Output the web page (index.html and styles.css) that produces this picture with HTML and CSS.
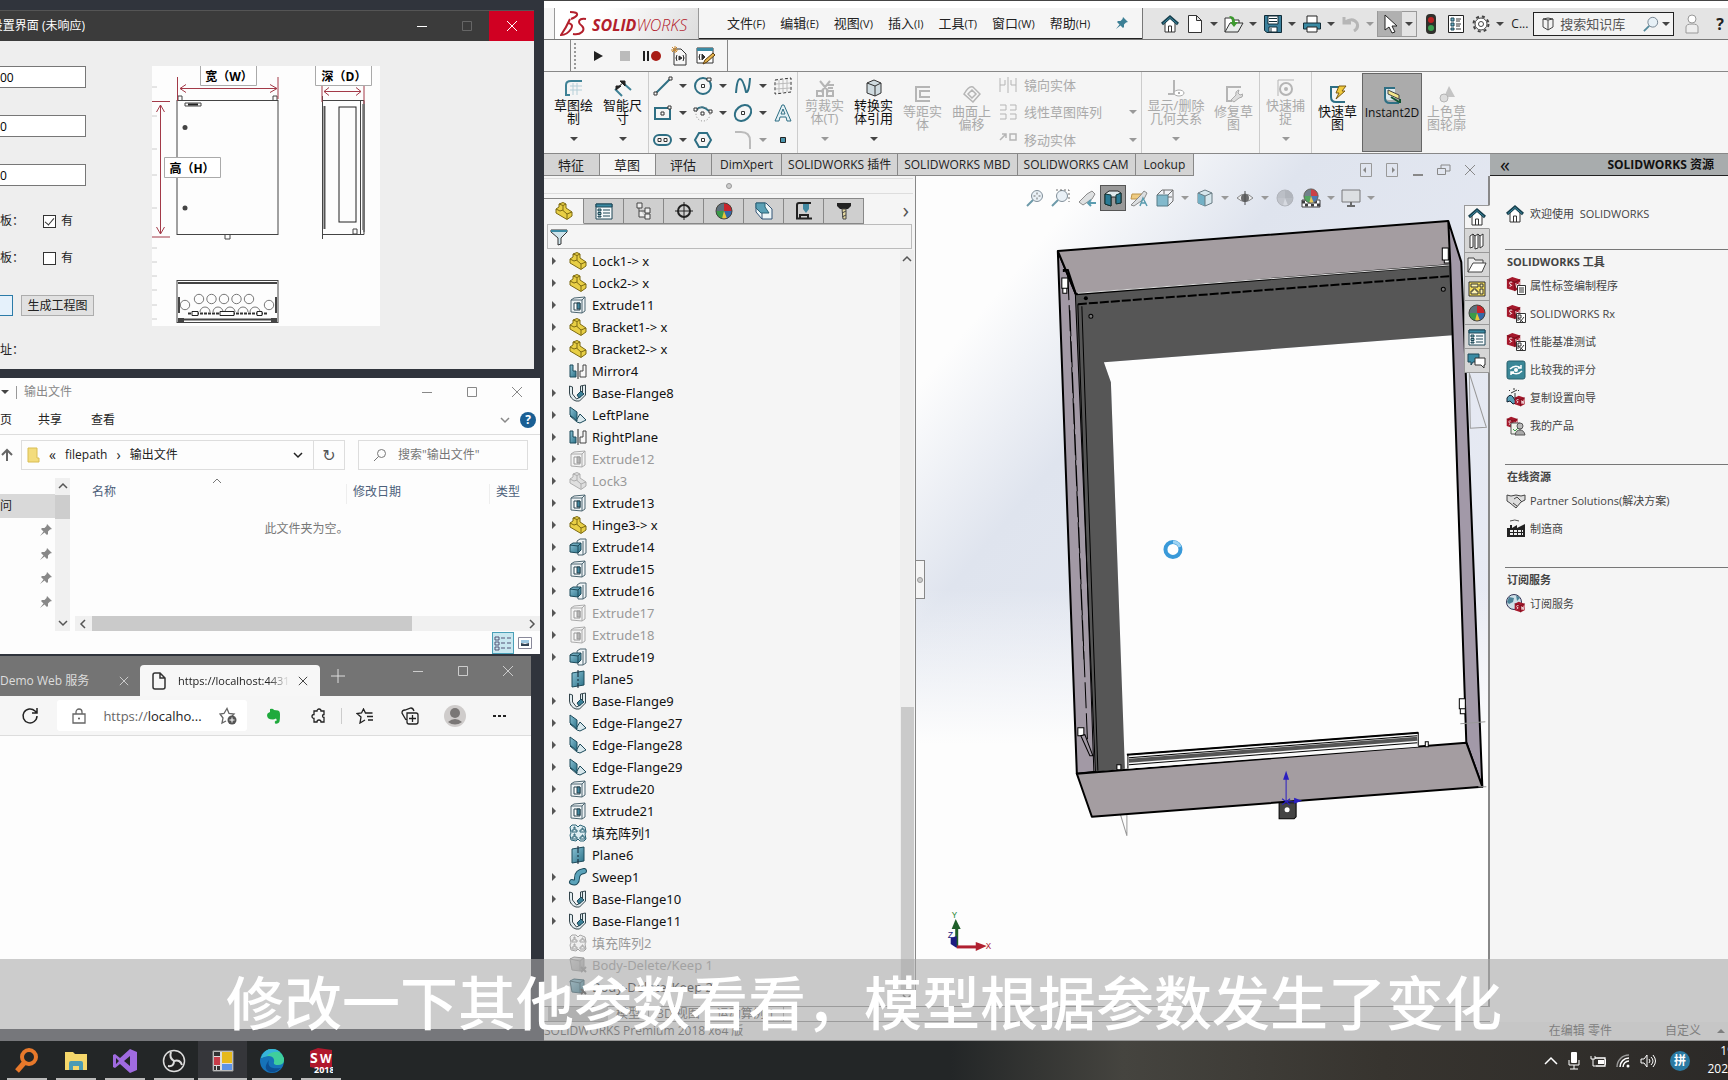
FILE: index.html
```html
<!DOCTYPE html>
<html lang="zh-CN">
<head>
    <meta charset="UTF-8">
    <meta name="viewport" content="width=device-width, initial-scale=1.0">
    <title>SOLIDWORKS</title>
    <link rel="stylesheet" href="styles.css">
</head>

<body>
    <!-- icons used more than once -->
    <svg class="defs" width="0" height="0" aria-hidden="true">
        <linearGradient id="teal" x1="0" y1="0" x2="1" y2="1"><stop offset="0" stop-color="#8cc3d6"/><stop offset="1" stop-color="#2c7288"/></linearGradient>
        <symbol id="part" viewBox="0 0 18 18"><path d="M1 7l3-2V2l4-1.500L11 2v4l6 4v4l-5 3.500L1 11z" fill="#e8cf45" stroke="#7d6a12"/><path d="M4 2l4 1.500L11 2M8 3.500v5l4 3.500 5-2M12 12v5M1 7l4 2 3-1" fill="none" stroke="#7d6a12"/></symbol>
        <symbol id="cut" viewBox="0 0 18 18"><path d="M2 4l3-2 11-1v14l-3 2-11-1z" fill="#eef3f5" stroke="#4c6570"/><path d="M2 4l11 0v13M13 4l3-3" fill="none" stroke="#4c6570"/><path d="M5 7h6v7H5z" fill="#fff" stroke="#27434f"/><path d="M8 7h3v6H8z" fill="#3f87a0" stroke="#27434f"/></symbol>
        <symbol id="boss" viewBox="0 0 18 18"><path d="M8 3l3-2h6v14l-3 2H9z" fill="#eef3f5" stroke="#4c6570"/><path d="M14 3v14" stroke="#4c6570"/><path d="M1 7l3-2 8 0v7l-3 3-8-1z" fill="url(#teal)" stroke="#1c4a5a"/><path d="M1 7l8 1v7M9 8l3-3" fill="none" stroke="#1c4a5a"/></symbol>
        <symbol id="mirror" viewBox="0 0 18 18"><path d="M1 3h3v6h3v6H1z" fill="url(#teal)" stroke="#1c4a5a"/><path d="M17 3h-3v6h-3v6h6z" fill="#f8f8f8" stroke="#444"/><path d="M9 1v16" stroke="#222"/></symbol>
        <symbol id="base" viewBox="0 0 18 18"><path d="M.500 2l3 1v7l4 5 4-2V2l5-1v10l-6 6H7Q1 15 .500 9z" fill="#e3edf0" stroke="#33444b"/><path d="M8 11l4-4 3 3-5 4z" fill="#3b7f96" stroke="#1c4a5a"/><path d="M13.500 2v7" stroke="#33444b"/></symbol>
        <symbol id="edge" viewBox="0 0 18 18"><path d="M1 10l7 6 3 1 6-3-6-6-3 5z" fill="#d8e7ec" stroke="#1c4a5a"/><path d="M1 1l7 5v9L1 9z" fill="url(#teal)" stroke="#1c4a5a"/></symbol>
        <symbol id="plane" viewBox="0 0 18 18"><path d="M3 3l12-2v14L3 17z" fill="url(#teal)" stroke="#1c4a5a"/><path d="M9 0v7m0 2v2m0 2v5" stroke="#123"/></symbol>
        <symbol id="pattern" viewBox="0 0 18 18"><path d="M1 3l2-2h4l2 2 2-2 5 2 1 5-1 2 1 5-2 2h-4l-2-2-2 2-5-1-1-5 1-2z" fill="#dfeef2" stroke="#2a6375"/><path d="M3 8h5V6H6V3H5v3H3zM11 8h5V6h-2V4h-1v2h-2zM3 15h5v-2H6v-3H5v3H3zM11 15h5v-2h-2v-2h-1v2h-2z" fill="none" stroke="#2a6375"/></symbol>
        <symbol id="sweep" viewBox="0 0 18 18"><path d="M3 14q5 2 5-4 0-6 7-7" fill="none" stroke="#1c4a5a" stroke-width="6" stroke-linecap="round"/><path d="M3 14q5 2 5-4 0-6 7-7" fill="none" stroke="#5ba3ba" stroke-width="4" stroke-linecap="round"/></symbol>
        <symbol id="bodydel" viewBox="0 0 18 18"><path d="M1 3l4-2 10 1v11l-4 2-8-1z" fill="url(#teal)" stroke="#1c4a5a"/><path d="M1 3l10 2v10M11 5l4-3" fill="none" stroke="#1c4a5a"/><path d="M12 11l5 5m0-5l-5 5" stroke="#333" stroke-width="2"/></symbol>
        <symbol id="house" viewBox="0 0 18 18"><path d="M4 8v9h10V8L9 3z" fill="#fff" stroke="#333"/><path d="M7.500 17v-6h3v6" fill="none" stroke="#333"/><path d="M1 9l8-7 8 7" fill="none" stroke="#173f4d" stroke-width="3"/><path d="M2 8.500l7-6 7 6" fill="none" stroke="#3a8aa3" stroke-width="1"/></symbol>
        <symbol id="ball" viewBox="0 0 18 18"><circle cx="9" cy="9" r="8" fill="#e9c53c"/><path d="M9 9V1a8 8 0 018 8z" fill="#c9242b"/><path d="M9 9V1a8 8 0 00-8 8z" fill="#5d6f7a"/><path d="M9 9H1a8 8 0 006 7.700z" fill="#3a9a49"/><path d="M9 9h8a8 8 0 01-5 7.400z" fill="#3568a8"/><circle cx="9" cy="9" r="8" fill="none" stroke="#444"/></symbol>
        <symbol id="sheet" viewBox="0 0 18 18"><path d="M1 2h16v15H1z" fill="#f6fafb" stroke="#1f4656"/><path d="M1 2h16v3H1z" fill="#3a8aa3" stroke="#1f4656"/><path d="M3 7h3v2H3zM3 10.500h3v2H3zM3 14h3v1H3z" fill="#8bb" stroke="#1f4656"/><path d="M8 8h7M8 11h7M8 14h7" stroke="#1f4656"/></symbol>
        <symbol id="cube" viewBox="0 0 18 18"><path d="M1 4l6-3 9 3v10l-6 3-9-3z" fill="#a5182b"/><path d="M1 4l9 3 6-3M10 7v10" fill="none" stroke="#6a0b18"/><path d="M7 7q-3-1-3 1t2 2-2 2M11 8l1 5 1-4 1 4 1-6" fill="none" stroke="#fff"/></symbol>
        <symbol id="lens" viewBox="0 0 18 18"><circle cx="11" cy="7" r="5.500" fill="#e7f0f6" stroke="#6b7b88"/><path d="M7 11l-6 6" stroke="#54899b" stroke-width="2"/></symbol>
        <symbol id="pushpin" viewBox="0 0 12 12"><path d="M7 0l5 5-2 .500-2 2 0 2.500-1 1-2.500-2.500L0 12l3.500-4.500L1 5l1-1 2.500 0 2-2z" fill="currentColor"/></symbol>
        <symbol id="close" viewBox="0 0 12 12"><path d="M1 1l10 10M11 1L1 11" stroke="currentColor"/></symbol>
        <symbol id="max" viewBox="0 0 12 12"><path d="M1.500 1.500h9v9h-9z" fill="none" stroke="currentColor"/></symbol>
        <symbol id="min" viewBox="0 0 12 12"><path d="M1 6.500h10" stroke="currentColor"/></symbol>
        <symbol id="up" viewBox="0 0 10 10"><path d="M1 7l4-4 4 4" fill="none" stroke="currentColor" stroke-width="1.500"/></symbol>
        <symbol id="disp" viewBox="0 0 18 18"><path d="M2 4l7-3 7 3v10l-7 3-7-3z" fill="#d3e5ec" stroke="#51666f"/><path d="M2 4l7 3v10l-7-3z" fill="#5ea6be"/><path d="M2 4l7 3 7-3M9 7v10" fill="none" stroke="#51666f"/></symbol>
    </svg>

    <div class="desktop">
        <div class="left">

            <section class="win form-win">
                <header class="titlebar">
                    <h1 class="title">设置界面 (未响应)</h1>
                    <button class="wbtn" aria-label="最小化"><svg width="12" height="12"><use href="#min"/></svg></button>
                    <button class="wbtn dim" aria-label="最大化" disabled><svg width="12" height="12"><use href="#max"/></svg></button>
                    <button class="wbtn red" aria-label="关闭"><svg width="12" height="12"><use href="#close"/></svg></button>
                </header>
                <form class="form">
                    <div class="fields">
                        <input class="num" aria-label="高" value="00">
                        <input class="num" aria-label="宽" value="0">
                        <input class="num" aria-label="深" value="0">
                        <div class="opt"><span>板：</span><input type="checkbox" id="c1" checked><label for="c1">有</label></div>
                        <div class="opt"><span>板：</span><input type="checkbox" id="c2"><label for="c2">有</label></div>
                        <div class="btns">
                            <button type="button" class="go" aria-label="生成模型"></button>
                            <button type="button">生成工程图</button>
                        </div>
                        <p class="addr">址：</p>
                    </div>
                    <svg class="drawing" viewBox="152 66 228 260">
                        <rect x="152" y="66" width="228" height="260" fill="#fdfdfd"/>
                        <path d="M152 87h5M152 116h5M152 149h5M152 175h5M152 208h5M152 248h5M152 262h5M152 276h5M152 290h5M152 305h5M152 319h5" stroke="#ccc"/>
                        <g fill="none" stroke="#444">
                            <rect x="177" y="100.500" width="101" height="134"/>
                            <path d="M178 100v-4h4v4M273 100v-4h4v4M225 235v4h5v-4"/>
                            <path d="M322.500 96v143M322 100.500h42v134h-42M360.500 101v133M364 104v128"/>
                            <rect x="339" y="107" width="17" height="115" stroke="#222"/>
                            <path d="M353 229h4v5h-4z"/>
                            <rect x="177" y="280.500" width="101" height="42"/>
                            <path d="M178 283h99M178 319.500h99M179 297v16M276 297v16" stroke-width="2"/>
                        </g>
                        <path d="M324.500 106v123" stroke="#555" stroke-width="2"/>
                        <path d="M362.500 104v126" stroke="#999"/>
                        <path d="M185 103h16v3h-16z" fill="none" stroke="#444"/><path d="M188 104.500h10" stroke="#222" stroke-width="2"/>
                        <circle cx="185" cy="127.500" r="2.500" fill="#444"/><circle cx="185" cy="208" r="2.500" fill="#444"/>
                        <g fill="none" stroke="#777">
                            <circle cx="199" cy="299" r="4.700"/><circle cx="211.500" cy="299" r="4.700"/><circle cx="224" cy="299" r="4.700"/><circle cx="236.500" cy="299" r="4.700"/><circle cx="249" cy="299" r="4.700"/>
                            <circle cx="185" cy="305" r="4.700"/><circle cx="269" cy="305" r="4.700"/>
                            <path d="M200 312a5 5 0 0110 0M213 312a5 5 0 0110 0M225 312a5 5 0 0110 0M238 312a5 5 0 0110 0M250 312a5 5 0 0110 0"/>
                        </g>
                        <path d="M188 313.500h79" stroke="#333" stroke-width="2" stroke-dasharray="3 1"/>
                        <path d="M192 311.500h6v4h-6zM220 311.500h14v4h-14zM257 311.500h5v4h-5z" fill="#fff" stroke="#222"/>
                        <path d="M178 318h6v4h-6zM271 318h6v4h-6z" fill="#444"/>
                        <g fill="none" stroke="#a33a48">
                            <path d="M177.500 77v24M278 77v22M180 88.500h97M186 84.500l-6 4 6 4M270 84.500l7 4-7 4"/>
                            <path d="M152 101.500h18M152 237h18M160.500 105v129M156.500 112l4-7 4 7M156.500 227l4 7 4-7"/>
                            <path d="M322 84v18M364 84v20M324 91.500h37M329 87.500l-5 4 5 4M356 87.500l5 4-5 4"/>
                        </g>
                        <g fill="#fff" stroke="#aaa"><path d="M200.500 66v19.500h56V66M315.500 66v19.500h56V66M164.500 157.500h56v20h-56z"/></g>
                        <g class="dim-text"><text x="229" y="81">宽（W）</text><text x="344" y="81">深（D）</text><text x="192" y="173">高（H）</text></g>
                    </svg>
                </form>
            </section>

            <section class="win explorer">
                <header class="ex-title">
                    <i class="caret dark"></i><span class="bar"></span><h2 class="ex-name">输出文件</h2>
                    <button class="wbtn" aria-label="最小化"><svg width="12" height="12"><use href="#min"/></svg></button>
                    <button class="wbtn" aria-label="最大化"><svg width="12" height="12"><use href="#max"/></svg></button>
                    <button class="wbtn" aria-label="关闭"><svg width="12" height="12"><use href="#close"/></svg></button>
                </header>
                <nav class="ex-tabs">
                    <a href="#">页</a><a href="#">共享</a><a href="#">查看</a>
                    <button class="fold" aria-label="展开"><svg width="10" height="10" class="flip"><use href="#up"/></svg></button>
                    <button class="help" aria-label="帮助">?</button>
                </nav>
                <div class="ex-addr">
                    <svg width="14" height="14" viewBox="0 0 14 14"><path d="M7 13V2M2 7l5-5 5 5" fill="none" stroke="#666" stroke-width="2"/></svg>
                    <div class="path">
                        <svg width="13" height="16" viewBox="0 0 13 16"><path d="M1 1h9v10h2v4H1z" fill="#f3dc7c" stroke="#d9bd52"/></svg>
                        <span class="laq">«</span><span>filepath</span><span class="laq">›</span><span>输出文件</span>
                        <svg class="flip dd" width="10" height="10"><use href="#up"/></svg>
                        <button class="reload" aria-label="刷新">↻</button>
                    </div>
                    <label class="ex-search">
                        <svg width="14" height="14" viewBox="0 0 14 14"><circle cx="8.500" cy="5.500" r="4" fill="none" stroke="#777"/><path d="M5.500 8.500L1 13" stroke="#777"/></svg>
                        <input aria-label="搜索" placeholder='搜索"输出文件"'>
                    </label>
                </div>
                <div class="ex-body">
                    <div class="nav-pane">
                        <span class="sel">问</span>
                        <svg width="12" height="12"><use href="#pushpin"/></svg>
                        <svg width="12" height="12"><use href="#pushpin"/></svg>
                        <svg width="12" height="12"><use href="#pushpin"/></svg>
                        <svg width="12" height="12"><use href="#pushpin"/></svg>
                    </div>
                    <div class="vscroll">
                        <svg width="10" height="10"><use href="#up"/></svg><span class="thumb"></span>
                        <svg class="flip" width="10" height="10"><use href="#up"/></svg>
                    </div>
                    <div class="files">
                        <svg class="sort" width="10" height="6"><path d="M1 5l4-4 4 4" fill="none" stroke="#777"/></svg>
                        <div class="cols"><span>名称</span><span>修改日期</span><span>类型</span></div>
                        <p class="empty">此文件夹为空。</p>
                        <div class="hscroll">
                            <svg class="rl" width="10" height="10"><use href="#up"/></svg><span class="thumb"></span>
                            <svg class="rr" width="10" height="10"><use href="#up"/></svg>
                        </div>
                    </div>
                </div>
                <footer class="ex-foot">
                    <button class="on" aria-label="详细信息"><svg width="18" height="16" viewBox="0 0 18 16"><path d="M1 2h4v3H1zM1 7h4v3H1zM1 12h4v3H1zM7 3h4M13 3h4M7 8h4M13 8h4M7 13h4M13 13h4" fill="none" stroke="#557"/></svg></button>
                    <button aria-label="大图标"><svg width="14" height="12" viewBox="0 0 14 12"><path d="M.500.500h13v11H.500z" fill="#fff" stroke="#889"/><path d="M3 3h8v3H3z" fill="#9cc6e0"/><path d="M3 6l4 1 4-1v3H3z" fill="#345"/></svg></button>
                </footer>
            </section>

            <section class="win edge">
                <header class="e-tabs">
                    <div class="etab off"><span>Demo Web 服务</span><button aria-label="关闭标签"><svg width="10" height="10"><use href="#close"/></svg></button></div>
                    <div class="etab on">
                        <svg width="14" height="18" viewBox="0 0 14 18"><path d="M1 3q0-2 2-2h5l5 5v9q0 2-2 2H3q-2 0-2-2zM8 1v5h5" fill="none" stroke="#333" stroke-width="1.500"/></svg>
                        <span class="ttl">https://localhost:4431</span><button aria-label="关闭标签"><svg width="10" height="10"><use href="#close"/></svg></button>
                    </div>
                    <button class="plus" aria-label="新标签"><svg width="16" height="16"><path d="M8 1v14M1 8h14" stroke="#ddd"/></svg></button>
                    <button class="wbtn" aria-label="最小化"><svg width="12" height="12"><use href="#min"/></svg></button>
                    <button class="wbtn" aria-label="最大化"><svg width="12" height="12"><use href="#max"/></svg></button>
                    <button class="wbtn" aria-label="关闭"><svg width="12" height="12"><use href="#close"/></svg></button>
                </header>
                <div class="e-bar">
                    <button aria-label="刷新"><svg width="18" height="18" viewBox="0 0 18 18"><path d="M16 9a7 7 0 11-2-5l2 2M16 1v5h-5" fill="none" stroke="#222" stroke-width="1.500"/></svg></button>
                    <div class="url">
                        <svg width="14" height="16" viewBox="0 0 14 16"><path d="M1 6h12v9H1zM4 6V4a3 3 0 016 0v2" fill="none" stroke="#666" stroke-width="1.300"/><circle cx="7" cy="10.500" r="1" fill="#555"/></svg>
                        <span>https://<b>localho...</b></span>
                        <svg width="18" height="18" viewBox="0 0 18 18"><path d="M7 14l-4 2 1-5-3-4 4-.500L8 1.500l2 5 5 .500-2 2" fill="none" stroke="#666" stroke-width="1.300"/><circle cx="13" cy="13" r="4.500" fill="#555"/><path d="M13 10.500v5M10.500 13h5" stroke="#fff"/></svg>
                    </div>
                    <button aria-label="印象笔记"><svg width="16" height="16" viewBox="0 0 16 16"><path d="M4 1q3-1 4 1l4 .500q2 .500 2 4 0 7-1 8-1 1.500-4 1-1-2 1-3l1 0-1-2q-2 1-3 1-6 0-6-4.500Q1 5 4 4z" fill="#1faa3d"/></svg></button>
                    <button aria-label="扩展"><svg width="16" height="16" viewBox="0 0 16 16"><path d="M3 3h3a2 2 0 014 0h3v3.500a1.500 1.500 0 000 3V14h-3a2 2 0 00-4 0H3v-3.500a2 2 0 010-4z" fill="none" stroke="#222" stroke-width="1.300"/></svg></button>
                    <span class="vline"></span>
                    <button aria-label="收藏夹"><svg width="18" height="16" viewBox="0 0 18 16"><path d="M9 12l-5 3 1-6-4-3.500 4.500-.500L7.500 1l2 4h7M11 8.500h6M12 12h5" fill="none" stroke="#222" stroke-width="1.300"/></svg></button>
                    <button aria-label="集锦"><svg width="18" height="18" viewBox="0 0 18 18"><path d="M5 13l-4-7q0-3 3-3l6-2q2 0 3 3M6 6h9q2 0 2 2v7q0 2-2 2H8q-2 0-2-2zM11.500 8v7M8 11.500h7" fill="none" stroke="#222" stroke-width="1.300"/></svg></button>
                    <button aria-label="个人资料"><svg width="22" height="22" viewBox="0 0 22 22"><circle cx="11" cy="11" r="11" fill="#cfcccb"/><circle cx="11" cy="8" r="5" fill="#7a7776"/><path d="M4 17q7-6 14 0-7 5-14 0" fill="#7a7776"/></svg></button>
                    <button aria-label="更多"><svg width="14" height="4"><path d="M0 2h3M5 2h3M10 2h3" stroke="#222" stroke-width="2"/></svg></button>
                </div>
                <div class="page"></div>
            </section>
        </div>

        <main class="sw">
            <div class="menubar">
                <div class="logo">
                    <svg width="27" height="28" viewBox="0 0 27 28"><path d="M10 2q8 0 7 3-1 2-6 4M10 9q-4 9-9 16 6 0 10-6 3-5-3-6M26 9q-7-1-7 3 0 2 3 4 3 3 0 6-3 3-9 2" fill="none" stroke="#b3202c" stroke-width="2"/></svg>
                    <span class="name"><b>SOLID</b>WORKS</span>
                </div>
                <nav class="menus">
                    <a href="#">文件<small>(F)</small></a><a href="#">编辑<small>(E)</small></a><a href="#">视图<small>(V)</small></a><a href="#">插入<small>(I)</small></a><a href="#">工具<small>(T)</small></a><a href="#">窗口<small>(W)</small></a><a href="#">帮助<small>(H)</small></a>
                    <svg class="pin" width="12" height="12"><use href="#pushpin"/></svg>
                </nav>
                <div class="qat">
                    <button aria-label="主页"><svg width="18" height="18"><use href="#house"/></svg></button>
                    <button aria-label="新建"><svg width="14" height="18"><path d="M.500.500h8l5 5v12H.500zM8.500.500v5h5" fill="#fff" stroke="#333"/></svg></button><i class="caret"></i>
                    <button aria-label="打开"><svg width="20" height="18"><path d="M1 17V3h6l2 2h6v3" fill="#fff" stroke="#333"/><path d="M1 17l5-9h13l-5 9z" fill="#e8eceb" stroke="#333"/><path d="M6 1q5 0 5 6h3l-4 5-4-5h2q0-4-3-5z" fill="#3c9a2f"/></svg></button><i class="caret"></i>
                    <button aria-label="保存"><svg width="18" height="18"><path d="M.500.500h17v17H3l-2.500-2z" fill="#3a7f9b" stroke="#122d38"/><path d="M4 1h10v8H4zM5 12h8v5H5z" fill="#fff" stroke="#122d38"/><path d="M5 3.500h8M5 6.500h8M7 13v4" stroke="#122d38"/></svg></button><i class="caret"></i>
                    <button aria-label="打印"><svg width="18" height="18"><path d="M4 8V1h10v7" fill="#fff" stroke="#222"/><path d="M.500 8h17v6H.500z" fill="#3a8aa3" stroke="#122d38"/><path d="M4 12h10v5H4z" fill="#fff" stroke="#222"/></svg></button><i class="caret"></i>
                    <button aria-label="撤销"><svg width="18" height="16"><path d="M2 1v6h7M3 6q8-5 12 1 2 5-3 8" fill="none" stroke="#b6b6b6" stroke-width="3"/></svg></button><i class="caret dim"></i>
                    <span class="pick"><button class="press" aria-label="选择"><svg width="14" height="20"><path d="M2 1v15l4-3 3 6 3-1-3-6h5z" fill="#fff" stroke="#222"/></svg></button><i class="caret"></i></span>
                    <button aria-label="重建"><svg width="10" height="20"><rect width="10" height="20" rx="4" fill="#30302c"/><circle cx="5" cy="6" r="3" fill="#b22"/><circle cx="5" cy="14" r="3" fill="#3a9f50"/></svg></button>
                    <button aria-label="属性"><svg width="16" height="18"><path d="M.500.500h15v17H.500z" fill="#fff" stroke="#222"/><path d="M3 3h3v3H3zM3 8h3v3H3zM3 13h3v2H3z" fill="#6fb0c5" stroke="#1f4656"/><path d="M8 4h5M8 6h4M8 9h5M8 11h4M8 14h5" stroke="#333"/></svg></button>
                    <button aria-label="选项"><svg width="18" height="18"><circle cx="9" cy="9" r="7.500" fill="none" stroke="#444" stroke-width="2" stroke-dasharray="3 3"/><circle cx="9" cy="9" r="6" fill="#fff" stroke="#444"/><circle cx="9" cy="9" r="2.500" fill="none" stroke="#444"/></svg></button><i class="caret"></i>
                    <span class="more">C...</span>
                    <label class="kb">
                        <svg width="12" height="14"><path d="M1 2l5-1 5 1v8l-5 3-5-3zM6 3v10M1 2l5 1 5-1" fill="none" stroke="#444"/></svg>
                        <input aria-label="搜索知识库" placeholder="搜索知识库">
                        <svg width="16" height="16"><use href="#lens"/></svg><i class="caret"></i>
                    </label>
                    <svg class="user" width="14" height="20"><circle cx="7" cy="5" r="4" fill="#fff" stroke="#999"/><path d="M1 19v-6q0-3 6-3t6 3v6z" fill="#eee" stroke="#999"/></svg>
                    <b class="q">?</b>
                </div>
            </div>

            <div class="macro">
                <div class="mtools">
                    <i class="grip"></i>
                    <button aria-label="运行宏"><svg width="10" height="12"><path d="M1 1l9 5-9 5z" fill="#222"/></svg></button>
                    <button aria-label="停止宏"><svg width="10" height="10"><path d="M0 0h10v10H0z" fill="#bbb"/></svg></button>
                    <button aria-label="录制宏"><svg width="20" height="12"><path d="M2 1v10M6 1v10" stroke="#222" stroke-width="2"/><circle cx="14" cy="6" r="5" fill="#a81c14"/></svg></button>
                    <button aria-label="新建宏"><svg width="16" height="20"><path d="M3 3h7l5 5v11H3z" fill="#f7f7f7" stroke="#333"/><path d="M6 9l-1 3 1 3M12 9l1 3-1 3M8 10l3 2-3 2z" fill="#333" stroke="#333"/><path d="M4 0v7M0 4h7M1 1l5 5M6 1L1 6" stroke="#c8852a"/></svg></button>
                    <button aria-label="编辑宏"><svg width="20" height="20"><path d="M1 2h16v15H1z" fill="#fff" stroke="#333"/><path d="M1 2h16v3H1z" fill="#3a8aa3"/><path d="M4 8l-1 3 1 3M6 8l3 3-3 3z" fill="#333" stroke="#333"/><path d="M7 18l2-4 8-7 2 2-8 7z" fill="#e5b44c" stroke="#5a3c10"/></svg></button>
                </div>
            </div>

            <div class="ribbon">
                <button class="big"><svg width="20" height="18"><path d="M18 2H7Q2 2 2 6v10h4" fill="none" stroke="#3f8296" stroke-width="2"/><path d="M6 7h12M6 11h12M9 4v12M13 4v12" stroke="#b5cfd8"/></svg><span>草图绘<br>制</span><i class="caret"></i></button>
                <button class="big"><svg width="20" height="18"><path d="M2 10l7 7M9 3l9 8" stroke="#3f8296" stroke-width="2"/><path d="M4 9l7-6M3 11V7h5zM12 2v5L7 2z" fill="#222" stroke="#222"/></svg><span>智能尺<br>寸</span><i class="caret"></i></button>
                <div class="sketch">
                    <button aria-label="直线"><svg width="20" height="20"><path d="M3 17L17 3" stroke="#2e6f84" stroke-width="2"/><path d="M1 16h3v3H1zM16 1h3v3h-3z" fill="#fff" stroke="#333"/></svg></button><i class="caret"></i>
                    <button aria-label="圆"><svg width="20" height="20"><circle cx="10" cy="10" r="8" fill="none" stroke="#2e6f84" stroke-width="2"/><path d="M8.500 8.500h3v3h-3zM14 2h4v3h-4z" fill="#fff" stroke="#333"/></svg></button><i class="caret"></i>
                    <button aria-label="样条曲线"><svg width="20" height="20"><path d="M3 17Q4 3 7 3t6 13q3 1 4-14" fill="none" stroke="#2e6f84" stroke-width="2"/></svg></button><i class="caret"></i>
                    <button aria-label="平面"><svg width="18" height="20"><path d="M1 4l16-2v14L1 18z" fill="none" stroke="#333" stroke-dasharray="3 2"/><path d="M5 4v13M9 3v14M13 3v13M2 8l14-1M2 13l14-1" fill="none" stroke="#bbb"/></svg></button>
                    <button aria-label="矩形"><svg width="20" height="18"><path d="M2 4h15v11H2z" fill="none" stroke="#2e6f84" stroke-width="2"/><path d="M8 8h3v3H8zM15 2h3v3h-3z" fill="#fff" stroke="#333"/></svg></button><i class="caret"></i>
                    <button aria-label="圆弧"><svg width="20" height="18"><path d="M3 6q6-6 13 1" fill="none" stroke="#2e6f84" stroke-width="2"/><circle cx="10" cy="10" r="7" fill="none" stroke="#888" stroke-dasharray="1 2"/><path d="M1 4h3v3H1zM16 6h3v3h-3zM8 8h3v3H8z" fill="#fff" stroke="#333"/></svg></button><i class="caret"></i>
                    <button aria-label="椭圆"><svg width="20" height="20"><ellipse cx="10" cy="10" rx="9" ry="7" transform="rotate(-40 10 10)" fill="none" stroke="#2e6f84" stroke-width="2"/><path d="M8.500 8.500h3v3h-3z" fill="#fff" stroke="#333"/></svg></button><i class="caret"></i>
                    <button aria-label="文字"><svg width="18" height="18"><path d="M1 17L8 1h2l7 16h-4l-1-4H6l-1 4zM7 10h4L9 5z" fill="#e3f0f5" stroke="#2e6f84"/></svg></button>
                    <button aria-label="槽口"><svg width="20" height="14"><rect x="1" y="2" width="17" height="10" rx="5" fill="none" stroke="#2e6f84" stroke-width="2"/><path d="M5 5.500h3v3H5zM11 5.500h3v3h-3z" fill="#fff" stroke="#333"/></svg></button><i class="caret"></i>
                    <button aria-label="多边形"><svg width="20" height="18"><path d="M6 2h8l4 7-4 7H6L2 9z" fill="none" stroke="#2e6f84" stroke-width="2"/><path d="M8.500 7.500h3v3h-3z" fill="#fff" stroke="#333"/></svg></button><i class="hole"></i>
                    <button aria-label="圆角"><svg width="20" height="20"><path d="M2 2h6q9 0 9 9v8" fill="none" stroke="#bbb" stroke-width="2"/></svg></button><i class="caret dim"></i>
                    <button aria-label="点"><svg width="6" height="6"><path d="M.500.500h5v5h-5z" fill="#4a94ac" stroke="#222"/></svg></button>
                </div>
                <div class="group">
                    <button class="big off"><svg width="18" height="18"><path d="M4 2l9 11M14 2L5 13M1 12h6v5H1zM11 12h6v5h-6zM12 6h6M12 9h5" fill="none" stroke="#b5b5b5" stroke-width="2"/></svg><span>剪裁实<br>体(T)</span><i class="caret"></i></button>
                    <button class="big"><svg width="18" height="18"><path d="M2 4l7-3 7 3v10l-6 3-8-3z" fill="#cfdbe0" stroke="#333"/><path d="M2 4l8 3 6-3M10 7v10" fill="none" stroke="#333"/></svg><span>转换实<br>体引用</span><i class="caret"></i></button>
                    <button class="big off low"><svg width="18" height="18"><path d="M16 2H2v14h14M16 6H6v6h10" fill="none" stroke="#b5b5b5" stroke-width="2"/></svg><span>等距实<br>体</span></button>
                    <button class="big off low"><svg width="18" height="18"><path d="M1 9q5-9 9-7l7 7-7 8zM5 9l4-4 4 4-4 4z" fill="none" stroke="#b5b5b5" stroke-width="1.500"/></svg><span>曲面上<br>偏移</span></button>
                    <div class="rows">
                        <button><svg width="18" height="16"><path d="M1 1v14M6 3v5H1M9 0v16M17 1v14M12 3v5h5" fill="none" stroke="#b5b5b5"/></svg>镜向实体</button>
                        <button><svg width="18" height="18"><path d="M1 2h6v5H1M11 2h6v5h-6M1 11h6v5H1M11 11h6v5h-6" fill="none" stroke="#b5b5b5"/></svg>线性草图阵列<i class="caret dim"></i></button>
                        <button><svg width="18" height="16"><path d="M1 8l6-6M3 2h4v4M11 2h6v6h-6z" fill="none" stroke="#b5b5b5" stroke-width="1.500"/></svg>移动实体<i class="caret dim"></i></button>
                    </div>
                </div>
                <div class="group">
                    <button class="big off wide"><svg width="18" height="18"><path d="M7 1v13M1 15h10" stroke="#b5b5b5" stroke-width="2"/><ellipse cx="12" cy="14" rx="5" ry="3" fill="#fff" stroke="#aaa"/><circle cx="12" cy="14" r="1" fill="#999"/></svg><span>显示/删除<br>几何关系</span><i class="caret"></i></button>
                    <button class="big off low"><svg width="18" height="18"><path d="M16 2H2v14h5" fill="none" stroke="#b5b5b5" stroke-width="2"/><path d="M6 15l5-5q-1-4 3-5l-1 3 2 2 3-1q0 4-4 4l-5 4z" fill="#ddd" stroke="#aaa"/></svg><span>修复草<br>图</span></button>
                </div>
                <div class="group">
                    <button class="big off"><svg width="18" height="18"><path d="M1 1h16M1 1v16" stroke="#b5b5b5"/><circle cx="9" cy="10" r="6" fill="none" stroke="#b5b5b5" stroke-width="2"/><circle cx="9" cy="10" r="2" fill="#b5b5b5"/></svg><span>快速捕<br>捉</span><i class="caret"></i></button>
                </div>
                <div class="group">
                    <button class="big low"><svg width="18" height="18"><path d="M12 2H2v10q0 5 5 5h9" fill="none" stroke="#2e6f84" stroke-width="2"/><path d="M10 1h7l-4 5h3l-9 8 3-6H7z" fill="#f2cb3c" stroke="#7a5a10"/></svg><span>快速草<br>图</span></button>
                    <button class="big low lit"><svg width="18" height="18"><path d="M2 2h10v12H6q-4 0-4-4z" fill="#dbe9ee"/><path d="M12 2H2v10q0 5 5 5h9" fill="none" stroke="#2e6f84" stroke-width="2"/><path d="M5 4l11 5v4L5 8z" fill="#f3e68b" stroke="#444"/><path d="M8 11l8 5M17 17v-4" stroke="#153" stroke-width="2"/></svg><span>Instant2D</span></button>
                    <button class="big off low"><svg width="18" height="18"><path d="M11 1l6 11H6z" fill="#c4c4c4"/><circle cx="6" cy="13" r="4" fill="#ddd" stroke="#b5b5b5"/></svg><span>上色草<br>图轮廓</span></button>
                </div>
            </div>

            <div class="work">
                <div class="doc">
                    <div class="strip">
                        <nav class="cmtabs">
                            <a href="#">特征</a><a href="#" class="on">草图</a><a href="#">评估</a><a href="#">DimXpert</a><a href="#">SOLIDWORKS 插件</a><a href="#">SOLIDWORKS MBD</a><a href="#">SOLIDWORKS CAM</a><a href="#">Lookup</a>
                        </nav>
                        <div class="docbtns">
                            <button aria-label="左平铺"><svg width="12" height="14"><path d="M.500.500h11v13H.500z" fill="none" stroke="#999"/><path d="M6 4v6L3 7z" fill="#888"/></svg></button>
                            <button aria-label="右平铺"><svg width="12" height="14"><path d="M.500.500h11v13H.500z" fill="none" stroke="#999"/><path d="M6 4v6l3-3z" fill="#888"/></svg></button>
                            <button aria-label="最小化"><svg width="10" height="14"><path d="M0 12h10" stroke="#888" stroke-width="2"/></svg></button>
                            <button aria-label="还原"><svg width="14" height="12"><path d="M.500 4.500h8v6h-8zM4 4V1h9v6H9" fill="none" stroke="#888"/></svg></button>
                            <button aria-label="关闭"><svg width="12" height="12"><use href="#close"/></svg></button>
                        </div>
                    </div>
                    <div class="mid">
                        <aside class="tree">
                            <div class="knob"><i></i></div>
                            <nav class="ttabs">
                                <a href="#" class="on" aria-label="设计树"><svg width="18" height="18"><use href="#part"/></svg></a>
                                <a href="#" aria-label="属性"><svg width="18" height="18"><use href="#sheet"/></svg></a>
                                <a href="#" aria-label="配置"><svg width="16" height="18"><path d="M1 1h5v5H1zM3 6v9h6M3 9h6M9 6h5v5H9zM9 12h5v5H9z" fill="#eee" stroke="#444"/></svg></a>
                                <a href="#" aria-label="DimXpert"><svg width="18" height="18"><circle cx="9" cy="9" r="6" fill="none" stroke="#222" stroke-width="2"/><path d="M9 0v18M0 9h18" stroke="#222"/></svg></a>
                                <a href="#" aria-label="外观"><svg width="18" height="18"><use href="#ball"/></svg></a>
                                <a href="#" aria-label="CAM 特征"><svg width="18" height="18"><path d="M1 1h10l6 6v10H7L1 10z" fill="#eef5f7" stroke="#357"/><path d="M1 1h9v4l4 6-8 0-5-5z" fill="#5aa0b6" stroke="#2a6375"/><path d="M7 17v-6" stroke="#357"/></svg></a>
                                <a href="#" aria-label="CAM 操作"><svg width="18" height="18"><path d="M2 17V3q0-2 2-2h12M1 16.500h16M5 16v-3h8v3" fill="none" stroke="#222" stroke-width="2"/><path d="M8 2h6v5l-3 4-3-4z" fill="#3f87a0"/></svg></a>
                                <a href="#" aria-label="刀具"><svg width="18" height="18"><path d="M2 1h14v3l-3 3H5L2 4z" fill="#222"/><path d="M7 7h4v10H8z" fill="#e5d9a0" stroke="#444"/><path d="M7 11l4-2M7 15l4-2" stroke="#444"/></svg></a>
                                <span class="chev">›</span>
                            </nav>
                            <label class="filter"><svg width="18" height="18" viewBox="0 0 18 18"><path d="M1 2h16v2l-6 6v6l-3 1v-7L1 4z" fill="#cfe3ea" stroke="#333"/><path d="M1 2h16v2H1z" fill="#3a8aa3"/></svg><input aria-label="过滤"></label>
                            <div class="treebox">
                                <ul class="list">
                                    <li><button aria-label="展开"></button><svg><use href="#part"/></svg>Lock1-&gt; x</li>
                                    <li><button aria-label="展开"></button><svg><use href="#part"/></svg>Lock2-&gt; x</li>
                                    <li><button aria-label="展开"></button><svg><use href="#cut"/></svg>Extrude11</li>
                                    <li><button aria-label="展开"></button><svg><use href="#part"/></svg>Bracket1-&gt; x</li>
                                    <li><button aria-label="展开"></button><svg><use href="#part"/></svg>Bracket2-&gt; x</li>
                                    <li class="leaf"><svg><use href="#mirror"/></svg>Mirror4</li>
                                    <li><button aria-label="展开"></button><svg><use href="#base"/></svg>Base-Flange8</li>
                                    <li><button aria-label="展开"></button><svg><use href="#edge"/></svg>LeftPlane</li>
                                    <li><button aria-label="展开"></button><svg><use href="#mirror"/></svg>RightPlane</li>
                                    <li class="off"><button aria-label="展开"></button><svg><use href="#cut"/></svg>Extrude12</li>
                                    <li class="off"><button aria-label="展开"></button><svg><use href="#part"/></svg>Lock3</li>
                                    <li><button aria-label="展开"></button><svg><use href="#cut"/></svg>Extrude13</li>
                                    <li><button aria-label="展开"></button><svg><use href="#part"/></svg>Hinge3-&gt; x</li>
                                    <li><button aria-label="展开"></button><svg><use href="#boss"/></svg>Extrude14</li>
                                    <li><button aria-label="展开"></button><svg><use href="#cut"/></svg>Extrude15</li>
                                    <li><button aria-label="展开"></button><svg><use href="#boss"/></svg>Extrude16</li>
                                    <li class="off"><button aria-label="展开"></button><svg><use href="#cut"/></svg>Extrude17</li>
                                    <li class="off"><button aria-label="展开"></button><svg><use href="#cut"/></svg>Extrude18</li>
                                    <li><button aria-label="展开"></button><svg><use href="#boss"/></svg>Extrude19</li>
                                    <li class="leaf"><svg><use href="#plane"/></svg>Plane5</li>
                                    <li><button aria-label="展开"></button><svg><use href="#base"/></svg>Base-Flange9</li>
                                    <li><button aria-label="展开"></button><svg><use href="#edge"/></svg>Edge-Flange27</li>
                                    <li><button aria-label="展开"></button><svg><use href="#edge"/></svg>Edge-Flange28</li>
                                    <li><button aria-label="展开"></button><svg><use href="#edge"/></svg>Edge-Flange29</li>
                                    <li><button aria-label="展开"></button><svg><use href="#cut"/></svg>Extrude20</li>
                                    <li><button aria-label="展开"></button><svg><use href="#cut"/></svg>Extrude21</li>
                                    <li class="leaf"><svg><use href="#pattern"/></svg>填充阵列1</li>
                                    <li class="leaf"><svg><use href="#plane"/></svg>Plane6</li>
                                    <li><button aria-label="展开"></button><svg><use href="#sweep"/></svg>Sweep1</li>
                                    <li><button aria-label="展开"></button><svg><use href="#base"/></svg>Base-Flange10</li>
                                    <li><button aria-label="展开"></button><svg><use href="#base"/></svg>Base-Flange11</li>
                                    <li class="leaf off"><svg><use href="#pattern"/></svg>填充阵列2</li>
                                    <li class="leaf off"><svg><use href="#bodydel"/></svg>Body-Delete/Keep 1</li>
                                    <li class="leaf"><svg><use href="#bodydel"/></svg>Body-Delete/Keep 2</li>
                                </ul>
                                <div class="tscroll"><svg width="10" height="10"><use href="#up"/></svg><span class="thumb"></span><svg class="flip" width="10" height="10"><use href="#up"/></svg></div>
                            </div>
                        </aside>

                        <div class="view">
                            <button class="handle" aria-label="收起设计树"><i></i></button>
                            <svg class="model" viewBox="916 176 572 829" preserveAspectRatio="xMidYMid slice">
                                <path d="M1469 373l17 54-16 1z" fill="none" stroke="#999"/>
                                <path d="M1120 812l7 23v-22" fill="none" stroke="#999"/>
                                <g stroke="#000" stroke-width="2" stroke-linejoin="round">
                                    <path d="M1104 362l347-27 15 407-341 26-14-386z" fill="#fdfdfd" stroke="none"/>
                                    <path d="M1058 251l18 43 20 477-19 2z" fill="#a299a5"/>
                                    <path d="M1076 294l374-29 2 70-348 27 7 20 14 386-29 3z" fill="#565656" stroke="none"/>
                                    <path d="M1058 251l390-30 2 44-374 29z" fill="#a49da1" stroke="none"/>
                                    <path d="M1058 251l390-30M1076 294l374-29M1058 251l18 43" fill="none"/>
                                    <path d="M1448 221l13 41 21 524-16-44-16-477z" fill="#a299a8"/>
                                    <path d="M1077 773l389-31 16 44-390 30z" fill="#a49da1"/>
                                </g>
                                <path d="M1078 293l371-28" stroke="#ddd"/>
                                <path d="M1078 304l372-28" stroke="#000" stroke-width="2" stroke-dasharray="9 2"/>
                                <path d="M1068 274l16 385M1070 310l18 440" stroke="#000" stroke-dasharray="26 5" fill="none"/>
                                <path d="M1078 304l16 467M1082 306l16 464" stroke="#000" fill="none"/>
                                <path d="M1064 272v-2h4l8 24" fill="none" stroke="#000" stroke-width="2"/>
                                <g fill="#fff" stroke="#000"><path d="M1062 278h6v10h-6zM1063 288h4v5h-4zM1078 727h6v8h-6zM1442 248h6v12h-6zM1444 260h5v3h-5zM1459 698h6v10h-6zM1460 708h5v5h-5z"/><path d="M1081 735l9 20 3 0-8-21z" fill="#a299a5"/></g>
                                <circle cx="1091" cy="316" r="2" fill="#777" stroke="#000"/><circle cx="1443" cy="289" r="2" fill="#777" stroke="#000"/><circle cx="1086" cy="298" r="2"/>
                                <path d="M1127 754l291-22v14l-291 22z" fill="#fafafa"/>
                                <path d="M1129 760l288-22" stroke="#555" stroke-width="4"/>
                                <path d="M1127 754l291-22v13M1128 753v15M1129 764l288-22M1129 757l288-22" fill="none" stroke="#000"/>
                                <path d="M1127 754l291-22" stroke="#000" stroke-width="2"/>
                                <path d="M1117 764h4v5h-4zM1425 741h3v5h-3z" fill="#fff" stroke="#000"/>
                                <path d="M1460 723l25-2M1478 786h8" stroke="#999"/>
                                <path d="M1279 802h17v14l-2 2h-15z" fill="#444" stroke="#000"/><circle cx="1287" cy="809" r="2.500" fill="#fff"/>
                                <path d="M1286 801v-24M1286 801h10M1282 798l8 6M1282 804l8-6" stroke="#2a1fc0"/>
                                <path d="M1286 770l3 9h-6zM1302 800l-8-3v6z" fill="#2a1fc0"/>
                                <circle cx="1173" cy="549" r="7.500" fill="#fff" stroke="#3a9ad9" stroke-width="4"/><path d="M1173 541.500a7.500 7.500 0 017 5" fill="none" stroke="#9fd4f3" stroke-width="3"/>
                                <path d="M957 946v-18" stroke="#1f5f2a" stroke-width="3"/><path d="M956 918l5 10h-9z" fill="#1f5f2a"/>
                                <path d="M957 946h20" stroke="#b02030" stroke-width="3"/><path d="M987 945l-11-4v9z" fill="#b02030"/>
                                <path d="M957 947l-6-4v-6l6-2z" fill="#1c1c80"/>
                                <g class="axis"><text x="952" y="917" fill="#2c8a3a">Y</text><text x="986" y="948" fill="#b02030">X</text><text x="948" y="937" fill="#1c1c80">Z</text></g>
                            </svg>
                            <div class="hud">
                                <button aria-label="整屏显示"><svg width="18" height="18"><use href="#lens"/><path d="M11 3.500v2M11 8.500v2M7.500 7h2M12.500 7h2" stroke="#555"/></svg></button>
                                <button aria-label="局部放大"><svg width="20" height="18"><use href="#lens" width="18" height="18"/><path d="M5 1h13v12" fill="none" stroke="#555" stroke-dasharray="2 2"/></svg></button>
                                <button aria-label="上一视图"><svg width="18" height="18"><path d="M1 13l8-8 5-3 3 3-3 5-9 6z" fill="#d9dcdd" stroke="#777"/><path d="M18 14h-7M13 11l-3 3 3 3" fill="none" stroke="#3f8ca3" stroke-width="2"/></svg></button>
                                <button class="press" aria-label="剖面视图"><svg width="18" height="18"><path d="M1 5l4-3 9 0 3 2v10h-5V8H7v9l-6-2z" fill="#dfe9ec" stroke="#222"/><path d="M1 5l6 1v11l-6-2zM12 6l5-2v10l-5 1z" fill="#2a7a94" stroke="#133"/></svg></button>
                                <button aria-label="动态注解"><svg width="18" height="18"><path d="M2 5h11l-2 5H1z" fill="#edc46e" stroke="#b5832a"/><path d="M1 16l9-9 4-5 3 2-3 6-10 7z" fill="#d9dcdd" stroke="#777"/><path d="M10 17l3-8 4 8M11 14h5" fill="none" stroke="#3f8ca3" stroke-width="1.500"/></svg></button>
                                <button aria-label="视图定向"><svg width="18" height="18"><path d="M6 1h11v11l-4 4" fill="none" stroke="#555"/><path d="M1 6h11v11H1z" fill="#6fb0c5" stroke="#3d6674"/><path d="M1 6l5-5M12 6l5-5M12 17l5-5M8 5V1M16 8h-4" stroke="#555"/></svg></button><i class="caret dim"></i>
                                <button aria-label="显示样式"><svg width="18" height="18"><use href="#disp"/></svg></button><i class="caret dim"></i>
                                <button aria-label="隐藏项目"><svg width="18" height="18"><path d="M1 9q8-8 16 0-8 7-16 0z" fill="#eee" stroke="#777"/><circle cx="9" cy="9" r="4" fill="#555"/><path d="M9 2v14" stroke="#333"/></svg></button><i class="caret dim"></i>
                                <button class="faint" aria-label="编辑外观"><svg width="18" height="18"><use href="#ball"/></svg></button>
                                <button aria-label="应用布景"><svg width="20" height="20"><path d="M1 12h18v7H1z" fill="#fff" stroke="#222"/><path d="M1 14h18" stroke="#222" stroke-width="3" stroke-dasharray="3 3"/><path d="M4 17h15" stroke="#222" stroke-width="3" stroke-dasharray="3 3"/><use href="#ball" x="2" width="16" height="16"/></svg></button><i class="caret dim"></i>
                                <button aria-label="视图设定"><svg width="20" height="18"><path d="M1 1h18v12H1z" fill="#dcdfe0" stroke="#666"/><path d="M10 13v4M6 17h8" stroke="#555" stroke-width="2"/></svg></button><i class="caret dim"></i>
                            </div>
                            <nav class="pane-tabs">
                                <a href="#" class="on" aria-label="资源"><svg width="18" height="18"><use href="#house"/></svg></a>
                                <a href="#" aria-label="设计库"><svg width="18" height="18"><path d="M2 4l3-2v13l-3 1zM7 4l3-2v14l-3 1zM12 4l3-2v12l-3 2zM5 2l2 2M10 2l2 2" fill="#fff" stroke="#333"/></svg></a>
                                <a href="#" aria-label="文件"><svg width="20" height="18"><path d="M1 16V2h6l1 2h8v3" fill="#eee" stroke="#444"/><path d="M1 16l5-9h13l-4 9z" fill="#fff" stroke="#444"/></svg></a>
                                <a href="#" aria-label="视图调色板"><svg width="18" height="18"><path d="M1 2h16v14H1z" fill="#f3dc5c" stroke="#333"/><path d="M3 4h7v3H3zM12 4h3v3h-3zM12 9h3v5h-3zM3 14h7v-3H8V9H5v2H3z" fill="#fdf3b0" stroke="#333"/></svg></a>
                                <a href="#" aria-label="外观"><svg width="18" height="18"><use href="#ball"/></svg></a>
                                <a href="#" aria-label="自定义属性"><svg width="18" height="18"><use href="#sheet"/></svg></a>
                                <a href="#" aria-label="论坛"><svg width="20" height="18"><path d="M1 2h11v8H6l-2 3v-3H1z" fill="#3a8aa3" stroke="#1f4656"/><path d="M8 6h10v7h-1v3l-3-3H8z" fill="#fff" stroke="#333"/></svg></a>
                            </nav>
                        </div>
                    </div>
                    <div class="btabs"><span></span><a href="#">模型</a><a href="#">3D 视图</a><a href="#">运动算例 1</a></div>
                </div>

                <aside class="res">
                    <h2 class="res-head"><span class="dbl">«</span>SOLIDWORKS 资源</h2>
                    <a class="item welcome" href="#"><svg width="18" height="18"><use href="#house"/></svg>欢迎使用&nbsp; SOLIDWORKS</a>
                    <section class="sec tools">
                        <h3>SOLIDWORKS 工具</h3>
                        <a class="item" href="#"><svg width="20" height="20"><use href="#cube" width="16" height="16"/><path d="M11.500 9.500h8v9h-8zM13 12h5M13 14h5M13 16h5" fill="#fff" stroke="#333"/></svg>属性标签编制程序</a>
                        <a class="item" href="#"><svg width="20" height="20"><use href="#cube" width="16" height="16"/><path d="M10.500 9.500h9v9h-9z" fill="#fff" stroke="#333"/><path d="M12 17v-6h3v3h-3l5 4M18 13l-4 5" fill="none" stroke="#333"/></svg>SOLIDWORKS Rx</a>
                        <a class="item" href="#"><svg width="20" height="20"><use href="#cube" width="16" height="16"/><path d="M10.500 9.500h9v9h-9z" fill="#fff" stroke="#333"/><path d="M12 17v-6h3v3h-3l5 4M18 13l-4 5" fill="none" stroke="#333"/></svg>性能基准测试</a>
                        <a class="item" href="#"><svg width="20" height="20"><rect x="1" y="1" width="18" height="18" rx="2" fill="#3b8797" stroke="#27606d"/><path d="M4 9q5-5 11-1M16 11q-5 5-11 1M15 5v3h-3M5 15v-3h3" fill="none" stroke="#fff" stroke-width="1.500"/><circle cx="10" cy="10" r="2" fill="#fff"/></svg>比较我的评分</a>
                        <a class="item" href="#"><svg width="20" height="20"><path d="M3 2l1 1M8 0v2M13 2l-1 1M5 5l6-3M9 5v8" stroke="#333"/><path d="M1 10q3-5 6-1t3 6l-3 1-3-3-3 1z" fill="#5aa0b6" stroke="#123"/><use href="#cube" x="8" y="7" width="12" height="12"/></svg>复制设置向导</a>
                        <a class="item" href="#"><svg width="20" height="20"><use href="#cube" width="13" height="13"/><path d="M5 7h9v11H5z" fill="#eef2ea" stroke="#555"/><path d="M7 13l2 2 4-4" fill="none" stroke="#3a9a49"/><circle cx="14" cy="10" r="3" fill="#bbb" stroke="#555"/><path d="M9 19q1-5 5-5t5 5z" fill="#aaa" stroke="#555"/></svg>我的产品</a>
                    </section>
                    <section class="sec online">
                        <h3>在线资源</h3>
                        <a class="item" href="#"><svg width="20" height="20"><path d="M1 4l4 1 5-1 5 1 4-1v5l-4 2-5 6-6-5-3-2z" fill="#ddd" stroke="#444"/><path d="M8 8l3-2 5 5M7 12l4 3" fill="none" stroke="#444"/></svg>Partner Solutions(解决方案)</a>
                        <a class="item" href="#"><svg width="20" height="20"><path d="M1 18V9h3V6h2v3l5-3v3l8-4v13z" fill="#222"/><path d="M4 12h13M4 15h13" stroke="#eee" stroke-width="2" stroke-dasharray="3 1"/><path d="M4 2q5-2 9 0" stroke="#555" fill="none"/></svg>制造商</a>
                    </section>
                    <section class="sec sub">
                        <h3>订阅服务</h3>
                        <a class="item" href="#"><svg width="20" height="20"><circle cx="8" cy="8" r="7.500" fill="#cfe0e8" stroke="#335"/><path d="M3 3l5 1-1 4-4 2-2-2zM10 1l4 3-3 3z" fill="#4b8297"/><use href="#cube" x="8" y="7" width="12" height="12"/></svg>订阅服务</a>
                    </section>
                </aside>
            </div>
            <footer class="status"><span>SOLIDWORKS Premium 2018 x64 版</span><span class="st-edit">在编辑 零件</span><span class="st-cust">自定义</span><i class="caret upc"></i></footer>
        </main>
    </div>

    <footer class="taskbar">
        <button aria-label="Everything"><svg width="24" height="26" viewBox="0 0 24 26"><circle cx="14" cy="9" r="7" fill="none" stroke="#e8792b" stroke-width="4"/><path d="M9 15l-7 8" stroke="#e8792b" stroke-width="5"/></svg></button>
        <button aria-label="文件资源管理器"><svg width="22" height="20" viewBox="0 0 22 20"><path d="M0 1h8l2 2h12v16H0z" fill="#f5d76b"/><path d="M4 19v-7q0-2 2-2h10q2 0 2 2v7h-4v-4H8v4z" fill="#4b9bb5"/></svg></button>
        <button aria-label="Visual Studio"><svg width="24" height="24" viewBox="0 0 24 24"><path d="M17 0l7 3v18l-7 3L7 15l-5 4-2-1V6l2-1 5 4zM17 7l-6 5 6 5zM3 9v6l3-3z" fill="#a06be0" fill-rule="evenodd"/></svg></button>
        <button aria-label="OBS"><svg width="24" height="24" viewBox="0 0 24 24"><circle cx="12" cy="12" r="10.500" fill="#222" stroke="#ddd" stroke-width="1.500"/><path d="M12 12Q7 9 9 3M12 12q6-2 8 4M12 12q0 6-6 5" fill="none" stroke="#ddd" stroke-width="2"/></svg></button>
        <button class="cur" aria-label="设置界面"><svg width="22" height="22" viewBox="0 0 22 22"><path d="M1 1h20v20H1z" fill="#ddd" stroke="#999"/><path d="M2 2h6v4H2z" fill="#333"/><path d="M2 7h6v8H2z" fill="#c63c48"/><path d="M10 2h10v11H10z" fill="#e6b91c"/><path d="M10 14h10v6H10z" fill="#5d93e6"/><path d="M2 16h2v4H2zM5 16h3v4H5z" fill="#333"/></svg></button>
        <button aria-label="Edge"><svg width="24" height="24" viewBox="0 0 24 24"><circle cx="12" cy="12" r="12" fill="#1673b9"/><path d="M1 9Q4 0 12 0t12 9q1 7-6 7-5 0-4-3 1-5-5-6-5 0-8 2z" fill="#3fcf9c"/><path d="M1 9q3-9 11-9 5 0 8 3-9-1-13 4z" fill="#36b3dc"/><path d="M9 11q-3 10 12 8-5 5-11 4-8-3-1-12" fill="#0d4f93"/></svg></button>
        <button aria-label="SOLIDWORKS 2018"><svg width="24" height="26" viewBox="0 0 24 26"><path d="M1 3l8-3 14 2v17l-8 3L1 19z" fill="#b0182c"/><g class="sw18"><text x="1" y="15" font-size="14">S</text><text x="11" y="15" font-size="12">W</text><text x="5" y="25" font-size="9">2018</text></g></svg></button>
        <div class="tray">
            <svg width="14" height="10"><path d="M1 8l6-6 6 6" fill="none" stroke="#fff" stroke-width="1.500"/></svg>
            <svg width="12" height="18"><rect x="3" y="0" width="6" height="11" rx="1" fill="#fff"/><path d="M1 8v5h10V8M6 13v4M2 17h8" fill="none" stroke="#fff"/></svg>
            <svg width="16" height="14"><path d="M5 4h10v8H6M15 6h1v4h-1" fill="none" stroke="#fff" stroke-width="1.300"/><path d="M8 6h6v4H8z" fill="#fff"/><path d="M1 2v3h4V2M3 5v7h3" fill="none" stroke="#fff"/></svg>
            <svg width="14" height="14"><path d="M1 13A12 12 0 0113 1" fill="none" stroke="#999" stroke-width="1.500"/><path d="M4 13a9 9 0 019-9M7 13a6 6 0 016-6" fill="none" stroke="#fff" stroke-width="1.500"/><circle cx="12" cy="12" r="1.500" fill="#fff"/></svg>
            <svg width="16" height="14"><path d="M1 5h3l3-4v12L4 9H1z" fill="none" stroke="#fff"/><path d="M9 5q2 2 0 4M11 3q4 4 0 8M13 1q5 6 0 12" fill="none" stroke="#fff"/></svg>
            <span class="ime">拼</span>
        </div>
        <time class="clock"><span>19</span><span>202</span></time>
    </footer>

    <div class="caption">修改一下其他参数看看，模型根据参数发生了变化</div>
</body>
</html>
```
FILE: styles.css
```css
*{box-sizing: border-box;}
body{margin: 0; height: 100vh; overflow: hidden; display: flex; flex-direction: column; background-color: #30343c; font: 12px/16px "Open Sans", "Noto Sans CJK SC", sans-serif; color: #222;}
h1, h2, h3, p, ul{margin: 0; padding: 0; font-size: 12px; font-weight: normal;}
ul{list-style: none;}
a{color: inherit; text-decoration: none;}
button{border: 0; padding: 0; background: none; font: inherit; color: inherit; display: flex; align-items: center; justify-content: center;}
input{font: inherit; border: 0; padding: 0; background: none; min-width: 0; outline: none;}
svg{flex-shrink: 0;}
.defs{position: absolute;}
.caret{flex-shrink: 0; width: 14px; height: 4px; display: flex; justify-content: center;}
.caret::before{content: ""; border: 4px solid transparent; border-top-color: #444; border-bottom: 0;}
.caret.dim::before{border-top-color: #999;}
.caret.dark{width: 10px;}
.flip{transform: rotate(180deg);}
.rl{transform: rotate(-90deg);}
.rr{transform: rotate(90deg);}

.desktop{flex: 1; min-height: 0; display: grid; grid-template-columns: 17fr 37fr;}
.left{display: flex; flex-direction: column; min-height: 0; min-width: 0; padding: 10px 0 12px;}
.wbtn{width: 45px; height: 30px; flex-shrink: 0;}

/* form window */
.form-win{margin: 0 10px 9px 0; background-color: #eee;}
.titlebar{display: flex; height: 31px; background-color: #3b3b3b; color: #fff; border-top: 1px solid #555;}
.titlebar .title{width: 85px; display: flex; justify-content: flex-end; align-items: center; white-space: nowrap; margin-right: auto; overflow: hidden;}
.wbtn.dim{color: #666;}
.wbtn.red{background-color: #d00022;}
.form{display: flex; justify-content: space-between; padding: 25px 154px 11px 0;}
.fields{display: flex; flex-direction: column; align-items: flex-start;}
.num{width: 86px; height: 22px; margin-bottom: 27px; padding: 0; background-color: #fff; border: 1px solid #777; border-left: 0; line-height: 18px;}
.opt{display: flex; align-items: center; height: 16px; margin-bottom: 21px;}
.opt span{width: 43px;}
.opt label{margin-left: 5px;}
.opt input{appearance: none; width: 13px; height: 13px; margin: 0; border: 1px solid #333; background-color: #fff; display: flex; justify-content: center;}
.opt input:checked::before{content: ""; width: 4px; height: 8px; border: solid #333; border-width: 0 1px 1px 0; transform: rotate(40deg);}
.btns{display: flex; gap: 8px; margin-top: 8px;}
.btns button{height: 21px; width: 73px; background-color: #e1e1e1; border: 1px solid #adadad;}
.btns .go{width: 13px; background-color: #e5f1fb; border: 1px solid #2b7ba8; border-left: 0;}
.addr{margin-top: 26px;}
.drawing{width: 228px; height: 260px;}
.dim-text{font-size: 12px; font-weight: 700; text-anchor: middle;}

/* explorer */
.explorer{margin: 0 4px 2px 0; background-color: #fdfdfd; color: #222;}
.ex-title{display: flex; align-items: center; height: 28px; padding-right: 1px; color: #888;}
.ex-title .bar{width: 1px; height: 13px; margin: 0 7px 0 6px; background-color: #999;}
.ex-name{margin-right: auto;}
.ex-tabs{display: flex; align-items: center; height: 29px; padding-right: 4px; border-bottom: 1px solid #ddd;}
.ex-tabs a{margin-right: 29px;}
.ex-tabs a:first-child{margin-right: 26px;}
.fold{margin: 0 10px 0 auto; color: #888;}
.help{width: 16px; height: 16px; border-radius: 50%; background-color: #1a5f94; color: #fff; font-weight: 700;}
.ex-addr{display: flex; height: 43px; padding: 5px 12px 8px 0; align-items: center;}
.path{flex: 1; display: flex; align-items: center; gap: 9px; height: 30px; margin: 0 13px 0 7px; padding-left: 5px; border: 1px solid #ddd; color: #222;}
.path .laq{font-size: 14px;}
.dd{margin-left: auto; margin-right: 1px;}
.reload{align-self: stretch; width: 31px; border-left: 1px solid #ddd; color: #555; font: 16px "DejaVu Sans", sans-serif;}
.ex-search{display: flex; align-items: center; gap: 11px; width: 170px; height: 30px; padding-left: 14px; border: 1px solid #ddd;}
.ex-search input{width: 120px;}
.ex-search input::placeholder{color: #777; opacity: 1;}
.ex-body{display: flex; height: 153px;}
.nav-pane{width: 55px; display: flex; flex-direction: column; align-items: flex-end; gap: 12px; padding-top: 16px; color: #888;}
.nav-pane svg{margin-right: 3px;}
.sel{width: 100%; height: 24px; line-height: 24px; background-color: #d9d9d9; color: #222; margin-bottom: -6px;}
.vscroll{width: 15px; display: flex; flex-direction: column; align-items: center; padding: 3px 0; background-color: #f0f0f0; color: #555;}
.vscroll .thumb{width: 15px; height: 24px; margin: 4px 0 auto; background-color: #cdcdcd;}
.files{flex: 1; margin-left: 5px; display: flex; flex-direction: column;}
.sort{margin-left: 137px;}
.cols{display: grid; grid-template-columns: 271px 143px 1fr; height: 20px; color: #4c607a;}
.cols span{padding-left: 6px; border-left: 1px solid #eee; white-space: nowrap;}
.cols span:first-child{padding-left: 17px; border: 0;}
.empty{text-align: center; margin: 17px 2px 0 0; color: #777;}
.hscroll{display: flex; align-items: center; height: 15px; margin-top: auto; padding: 0 3px; background-color: #f0f0f0; color: #555;}
.hscroll .thumb{width: 320px; height: 15px; margin: 0 auto 0 4px; background-color: #cacaca;}
.ex-foot{display: flex; justify-content: flex-end; align-items: center; gap: 4px; height: 23px; padding-right: 8px;}
.ex-foot .on{width: 22px; height: 22px; border: 1px solid #4aa0b8; background-color: #c9e8f0;}

/* browser */
.edge{flex: 1; min-height: 0; display: flex; flex-direction: column; margin-right: 13px; background-color: #fdfdfd;}
.e-tabs{display: flex; height: 40px; padding-right: 1px; background-color: #747474; color: #ccc;}
.etab{display: flex; align-items: center; height: 31px; margin-top: 9px;}
.etab.off{width: 140px; padding-right: 11px; justify-content: space-between; color: #ddd;}
.etab.on{width: 180px; padding: 0 12px; background-color: #f7f7f7; border-radius: 4px 4px 0 0; color: #222;}
.ttl{flex: 1; margin: 0 8px 0 12px; overflow: hidden; white-space: nowrap; font-size: 11px; -webkit-mask-image: linear-gradient(90deg, #000 80%, transparent);}
.plus{margin: 0 auto 0 10px;}
.e-bar{display: flex; align-items: center; height: 40px; padding-left: 7px; background-color: #f6f6f6; border-bottom: 1px solid #ddd;}
.e-bar button{width: 45px;}
.url{display: flex; align-items: center; justify-content: space-between; width: 190px; height: 31px; margin: 0 4px 0 5px; padding: 0 10px 0 15px; border-radius: 3px; background-color: #fff; font-size: 13px; color: #666; white-space: nowrap;}
.url b{font-weight: normal; color: #222;}
.vline{width: 1px; height: 16px; background-color: #ccc;}

/* solidworks */
.sw{display: flex; flex-direction: column; min-width: 0; min-height: 0; border-top: 1px solid #444; background-color: #f5f5f5;}
.menubar{display: flex; height: 39px; border-top: 7px solid #fff; border-bottom: 1px solid #777; padding-left: 10px;}
.logo{display: flex; align-items: center; width: 145px; padding-left: 5px; border: 1px solid #999; border-width: 0 1px; background: linear-gradient(120deg, #fff 30%, #ddd); color: #b3202c;}
.logo .name{margin: 3px 0 0 5px; font: italic 300 16px "Open Sans", sans-serif;}
.logo b{font-weight: 700;}
.menus{display: flex; align-items: center; flex: 1; gap: 15px; padding-left: 28px; font-size: 13px; border-bottom: 1px solid #222; white-space: nowrap;}
.menus small{font-size: 11px;}
.pin{color: #3c7f95; margin-left: 11px;}
.qat{display: flex; align-items: center; padding-left: 14px; background-color: #e4e4e4; border-left: 1px solid #777;}
.qat button{width: 25px; height: 25px;}
.pick{display: flex; align-items: center; height: 26px; border: 1px solid #999; margin-right: 1px;}
.pick .press{width: 24px; background-color: #b0b0b0;}
.more{margin: 0 5px 0 4px;}
.kb{display: flex; align-items: center; width: 141px; height: 24px; padding-left: 8px; border: 1px solid #222; background-color: #f3f3f3;}
.kb input{flex: 1; margin-left: 6px; font-size: 13px;}
.kb input::placeholder{color: #555; opacity: 1;}
.user{margin: 0 17px 0 11px;}
.q{font-size: 16px; margin-right: 4px;}
.macro{height: 32px; padding-left: 26px; border-bottom: 1px solid #888;}
.mtools{display: flex; align-items: center; width: 158px; height: 31px; border: 1px solid #888; border-width: 0 1px;}
.mtools button{width: 27px;}
.grip{width: 4px; height: 26px; margin: 0 6px 0 3px; border-left: 2px dotted #999;}
.ribbon{display: flex; height: 82px; border-bottom: 1px solid #888; padding-left: 5px; color: #111;}
.big{flex-direction: column; justify-content: flex-start; width: 49px; height: 79px; margin-top: 1px; padding-top: 6px; font-size: 13px; line-height: 13px; white-space: nowrap;}
.big span{height: 28px; margin-top: 2px; margin-bottom: 10px;}
.big.low{padding-top: 12px;}
.big.wide{width: 66px;}
.big.off{color: #aaa;}
.big.off .caret::before{border-top-color: #999;}
.big.lit{width: 60px; border: 1px solid #666; background-color: #ababab; font-size: 12px;}
.sketch{display: grid; grid-template-columns: 26px 14px 26px 14px 26px 14px 26px; align-items: center; border: 1px solid #ccc; border-width: 0 1px; padding: 0 1px; margin: 0 1px;}
.group{display: flex; padding: 0 1px; border-right: 1px solid #ccc;}
.group:last-child{border: 0;}
.rows{width: 144px; display: flex; flex-direction: column; justify-content: space-around; color: #aaa; font-size: 13px;}
.rows button{justify-content: flex-start; gap: 7px; padding-left: 3px;}
.rows .caret{margin-left: auto;}

.work{flex: 1; min-height: 0; display: flex;}
.doc{flex: 1; min-width: 0; display: flex; flex-direction: column; background: linear-gradient(rgba(253, 253, 253, 0) 50%, #fdfdfd 68%), linear-gradient(130deg, #fdfdfd 34%, #dfe4ee 46%, #e8ebf4 80%);}
.strip{display: flex; justify-content: space-between; height: 22px;}
.cmtabs{display: flex; background-color: #d4d4d4; border-bottom: 1px solid #888;}
.cmtabs a{padding: 0 6px; line-height: 22px; border-right: 1px solid #888; white-space: nowrap;}
.cmtabs a:nth-child(-n+3){padding: 0 15px 0 14px; font-size: 13px;}
.cmtabs a:nth-child(4), .cmtabs a:last-child{padding: 0 8px;}
.cmtabs .on{background-color: #f5f5f5;}
.docbtns{display: flex; align-items: center; padding: 10px 7px 0 0; color: #888;}
.docbtns button{width: 26px;}
.mid{flex: 1; min-height: 0; display: flex;}
.tree{width: 372px; display: flex; flex-direction: column; background-color: #f5f5f5; border-right: 1px solid #888;}
.knob{height: 16px; margin: 2px 2px 4px 0; border: 1px solid #ddd; border-width: 1px 0; display: flex; justify-content: center; align-items: center;}
.knob i, .handle i{width: 6px; height: 6px; border-radius: 50%; border: 1px solid #999; background-color: #ccc;}
.ttabs{display: flex; height: 26px;}
.ttabs a{width: 40px; display: flex; align-items: center; justify-content: center; background-color: #cfcfcf; border: 1px solid #888; border-left: 0;}
.ttabs .on{background-color: #f5f5f5; border-bottom-color: transparent;}
.chev{margin-left: auto; padding-right: 6px; font-size: 22px; line-height: 22px; color: #555;}
.filter{display: flex; align-items: center; height: 25px; margin: 0 3px 1px; padding-left: 2px; border: 1px solid #bbb;}
.filter input{flex: 1;}
.treebox{flex: 1; min-height: 0; display: flex; justify-content: space-between;}
.list{overflow: hidden; font: 13px/22px "Noto Sans", "Noto Sans CJK SC", sans-serif; color: #111;}
.list li{display: flex; align-items: center; height: 22px; padding-left: 8px; white-space: nowrap;}
.list svg{width: 20px; height: 18px; margin-right: 4px;}
.list button{width: 4px; margin-right: 12px; border: 4px solid transparent; border-left-color: #555; border-right: 0;}
.list .leaf{padding-left: 24px;}
.list .off{color: #999;}
.list .off svg{filter: grayscale(1); opacity: .5;}
.tscroll{width: 14px; margin-right: 1px; display: flex; flex-direction: column; align-items: center; justify-content: space-between; padding: 4px 0; background-color: #eee; color: #555;}
.tscroll .thumb{width: 13px; height: 38%; margin: auto 0 1px; background-color: #cacaca;}

.view{flex: 1; min-width: 0; position: relative; display: flex; flex-direction: column; justify-content: flex-start; border-right: 2px solid #888;}
.model{position: absolute; inset: 0; width: 100%; height: 100%;}
.axis{font: 9px "Liberation Mono", monospace;}
.handle{position: absolute; left: 0; top: 384px; width: 9px; height: 39px; background-color: #f5f5f5; border: 1px solid #888; border-left: 0;}
.hud{position: relative; display: flex; align-items: center; justify-content: center; padding-right: 4px; height: 26px; margin-top: 9px;}
.hud button{width: 26px; height: 26px; opacity: .85;}
.hud .press{border: 1px solid #555; background-color: #999; opacity: 1;}
.hud .faint{opacity: .3; filter: grayscale(1);}
.pane-tabs{position: absolute; right: -2px; top: 29px; width: 26px; display: flex; flex-direction: column;}
.pane-tabs a{height: 24px; display: flex; align-items: center; justify-content: center; border: 1px solid #999; border-top: 0; background-color: #d6d6d6;}
.pane-tabs .on{background-color: #f5f5f5; border-top: 1px solid #999; border-right-color: #f5f5f5;}
.btabs{display: flex; height: 16px; background-color: #f5f5f5; border: 1px solid #888; border-width: 1px 0; line-height: 13px; color: #444; padding-left: 4px;}
.btabs span{width: 60px; background-color: #bbb;}
.btabs a{padding: 0 8px; border-right: 1px solid #999;}

.res{width: 238px; padding-left: 15px; background-color: #f5f5f5; color: #444; font-size: 11px; white-space: nowrap; overflow: hidden;}
.res-head{display: flex; justify-content: space-between; align-items: center; height: 22px; margin-left: -15px; padding: 0 14px 0 10px; background-color: #a8acad; border-bottom: 1px solid #222; font-weight: 700; color: #111;}
.dbl{font-size: 20px; line-height: 16px; font-weight: 400;}
.item{display: flex; align-items: center; gap: 4px; height: 28px; padding-left: 1px;}
.welcome{gap: 6px; height: 73px; padding: 2px 0 0 1px;}
.sec{border-top: 1px solid #777; padding-top: 4px;}
.sec h3{font-size: 11px; font-weight: 700; padding-left: 2px; line-height: 16px; margin-bottom: 2px;}
.tools{height: 215px;}
.online{height: 103px;}
.status{display: flex; align-items: center; height: 19px; border-bottom: 1px solid #777; background-color: #eee; color: #444;}
.st-edit{margin-left: auto; margin-right: 53px;}
.st-cust{margin-right: 13px;}
.upc{transform: rotate(180deg);}

/* taskbar */
.taskbar{display: flex; height: 39px; padding-left: 2px; background: linear-gradient(90deg, #232627 55%, #45443f 65%, #37342f 80%, #2c2a28); color: #fff;}
.taskbar button{width: 49px; height: 39px; background: linear-gradient(#bbb, #bbb) bottom/40px 2px no-repeat;}
.taskbar .cur{background: linear-gradient(#bbb, #bbb) bottom/49px 2px no-repeat, #35363a;}
.sw18{font-family: "Open Sans", sans-serif; font-weight: 700; fill: #fff;}
.tray{margin-left: auto; display: flex; align-items: center; gap: 10px;}
.ime{width: 20px; height: 20px; border-radius: 50%; background-color: #2a7aa3; text-align: center; line-height: 20px; font-weight: 700; margin-left: 4px;}
.clock{width: 38px; display: flex; flex-direction: column; align-items: flex-end; line-height: 18px; padding-top: 1px; overflow: hidden;}
.clock span:first-child{margin-right: -6px;}

.caption{position: fixed; left: 0; right: 0; bottom: 39px; height: 82px; padding-top: 1px; background-color: rgba(168, 168, 168, .58); color: #fff; font: 500 58px/80px "Noto Sans CJK SC", sans-serif; text-align: center; white-space: nowrap; pointer-events: none;}
```
